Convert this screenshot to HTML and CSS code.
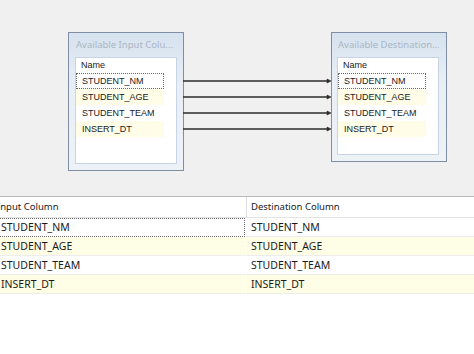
FILE: index.html
```html
<!DOCTYPE html>
<html lang="en">
<head>
  <meta charset="UTF-8">
  <title>Column Mappings</title>
  <link rel="stylesheet" href="styles.css">
</head>
<body>

<div class="canvas">
  <div class="table-box input-box">
    <div class="box-title">Available Input Colu...</div>
    <div class="list">
      <div class="list-head">Name</div>
      <div class="item focus">STUDENT_NM</div>
      <div class="item alt">STUDENT_AGE</div>
      <div class="item">STUDENT_TEAM</div>
      <div class="item alt">INSERT_DT</div>
    </div>
  </div>

  <svg class="links" width="474" height="196">
    <g stroke="#2b2b2b" stroke-width="1.4" fill="#2b2b2b">
      <line x1="183" y1="81" x2="329" y2="81" />
      <line x1="183" y1="97" x2="329" y2="97" />
      <line x1="183" y1="113" x2="329" y2="113" />
      <line x1="183" y1="129" x2="329" y2="129" />
      <path d="M327 79 L331 81 L327 83 Z" stroke-width="0.6" />
      <path d="M327 95 L331 97 L327 99 Z" stroke-width="0.6" />
      <path d="M327 111 L331 113 L327 115 Z" stroke-width="0.6" />
      <path d="M327 127 L331 129 L327 131 Z" stroke-width="0.6" />
    </g>
  </svg>

  <div class="table-box dest-box">
    <div class="box-title">Available Destination...</div>
    <div class="list">
      <div class="list-head">Name</div>
      <div class="item focus">STUDENT_NM</div>
      <div class="item alt">STUDENT_AGE</div>
      <div class="item">STUDENT_TEAM</div>
      <div class="item alt">INSERT_DT</div>
    </div>
  </div>
</div>

<div class="grid">
  <div class="hcell first">Input Column</div>
  <div class="hcell">Destination Column</div>

  <div class="cell first focus">STUDENT_NM</div>
  <div class="cell">STUDENT_NM</div>

  <div class="cell first alt">STUDENT_AGE</div>
  <div class="cell alt">STUDENT_AGE</div>

  <div class="cell first">STUDENT_TEAM</div>
  <div class="cell">STUDENT_TEAM</div>

  <div class="cell first alt">INSERT_DT</div>
  <div class="cell alt">INSERT_DT</div>
</div>

</body>
</html>
```

FILE: styles.css
```css
body {
  margin: 0;
  width: 474px;
  height: 354px;
  overflow: hidden;
  background-color: #fff;
  font-family: "Noto Sans", "Open Sans", sans-serif;
  color: #1a1a1a;
}
.canvas {
  position: relative;
  height: 196px;
  background-color: #f0f0f0;
  border-bottom: 1px solid #b9b9b9;
}
.links {
  position: absolute;
  left: 0;
  top: 0;
}
.table-box {
  position: absolute;
  top: 32px;
  width: 116px;
  box-sizing: border-box;
  border: 1px solid #7f8ea3;
  background: linear-gradient(#d6e2ef, #e9eff6 40%, #edf2f7);
  display: flex;
  flex-direction: column;
}
.input-box {
  left: 68px;
  height: 139px;
  padding: 0 6px 6px 6px;
}
.dest-box {
  left: 331px;
  height: 130px;
  padding: 0 7px 6px 5px;
}
.box-title {
  height: 24px;
  line-height: 24px;
  font-size: 9.5px;
  color: #a9b5c3;
  white-space: nowrap;
  overflow: hidden;
  padding-left: 1px;
}
.list {
  flex: 1;
  background-color: #fff;
  border: 1px solid #c6d4e4;
  font-family: "Liberation Sans", Arial, sans-serif;
  font-size: 9px;
}
.list-head {
  height: 15px;
  line-height: 15px;
  padding-left: 5px;
}
.item {
  width: 88px;
  height: 16px;
  line-height: 16px;
  padding-left: 6px;
  box-sizing: border-box;
}
.item.alt {
  background-color: #fffde7;
}
.item.focus {
  border: 1px dotted #6a6a6a;
  line-height: 14px;
  padding-left: 5px;
}
.grid {
  display: grid;
  grid-template-columns: 250px 1fr;
  margin-left: -4px;
  font-size: 10.5px;
}
.hcell {
  height: 20px;
  line-height: 20px;
  padding-left: 4px;
  font-size: 9.5px;
  border-bottom: 1px solid #e4e4e4;
  border-left: 1px solid #dedede;
}
.hcell.first {
  padding-left: 1px;
  border-left: none;
}
.cell {
  height: 19px;
  line-height: 19px;
  padding-left: 5px;
  box-sizing: border-box;
  border-bottom: 1px solid #ededed;
}
.cell.first {
  padding-left: 5px;
  margin-right: 1px;
}
.cell.alt {
  background-color: #fefde6;
}
.cell.focus {
  border: 1px dotted #6a6a6a;
  line-height: 17px;
  padding-left: 4px;
}
```
